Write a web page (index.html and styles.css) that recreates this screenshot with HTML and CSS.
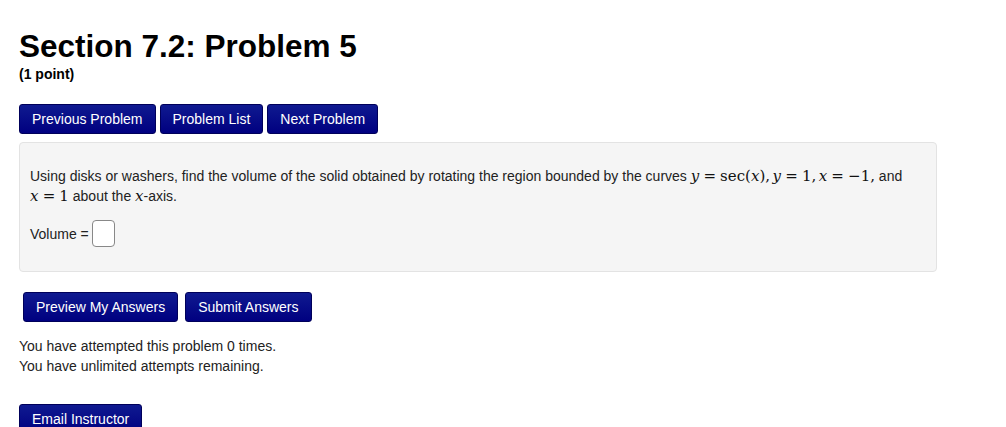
FILE: index.html
```html
<!DOCTYPE html>
<html>
<head>
<meta charset="utf-8">
<link rel="stylesheet" href="styles.css">
</head>
<body>
<div class="page">
  <h2 class="title">Section 7.2: Problem 5</h2>
  <div class="points">(1 point)</div>
  <div class="nav">
    <span class="btn">Previous Problem</span>
    <span class="btn">Problem List</span>
    <span class="btn">Next Problem</span>
  </div>
  <div class="well">
    <p class="q">Using disks or washers, find the volume of the solid obtained by rotating the region bounded by the curves <span class="m"><i>y</i><span class="rel">=</span>sec(<i>x</i>),<span class="th"></span><i>y</i><span class="rel">=</span>1,<span class="th"></span><i>x</i><span class="rel">=</span>&minus;1,</span> and <span class="m"><i>x</i><span class="rel">=</span>1</span> about the <span class="m"><i>x</i></span>-axis.</p>
    <div class="ans">Volume = <span class="input"></span></div>
  </div>
  <div class="submit">
    <span class="btn">Preview My Answers</span>
    <span class="btn">Submit Answers</span>
  </div>
  <div class="info">You have attempted this problem 0 times.<br>You have unlimited attempts remaining.</div>
  <div class="email"><span class="btn">Email Instructor</span></div>
</div>
</body>
</html>
```
FILE: styles.css
```css
html, body {
  margin: 0;
  padding: 0;
  background: #fff;
}
body {
  font-family: "Liberation Sans", Arial, sans-serif;
  font-size: 14px;
  line-height: 20px;
  color: #222;
}
.page {
  padding: 26px 19px 0 19px;
}
.title {
  margin: 0;
  font-size: 31.5px;
  line-height: 40px;
  font-weight: bold;
  color: #000;
}
.points {
  font-size: 14px;
  font-weight: bold;
  line-height: 16px;
  margin-top: 0;
  color: #000;
}
.nav {
  display: flex;
  gap: 4px;
  margin-top: 22px;
}
.btn {
  display: inline-block;
  box-sizing: border-box;
  height: 30px;
  padding: 4px 12px;
  font-size: 14px;
  line-height: 20px;
  color: #fff;
  background: linear-gradient(#0f1a90, #000080);
  border: 1px solid #00005a;
  border-radius: 3px;
  white-space: nowrap;
}
.well {
  margin-top: 8px;
  width: 918px;
  box-sizing: border-box;
  height: 130px;
  background: #f5f5f5;
  border: 1px solid #e3e3e3;
  border-radius: 4px;
  padding: 23px 10px 0 10px;
}
.q {
  margin: 0;
  color: #222;
}
.m {
  font-family: "DejaVu Serif", "Liberation Serif", serif;
  font-size: 15px;
  line-height: 18px;
  white-space: nowrap;
  color: #111;
}
.m i {
  font-style: italic;
}
.rel {
  margin: 0 0.2778em;
}
.th {
  display: inline-block;
  width: 0.1667em;
}
.ans {
  margin-top: 14px;
  display: flex;
  align-items: center;
  gap: 3px;
}
.input {
  display: inline-block;
  width: 23px;
  height: 27px;
  box-sizing: border-box;
  background: #fff;
  border: 1px solid #888;
  border-radius: 4px;
}
.submit {
  display: flex;
  gap: 7px;
  margin-top: 20px;
  padding-left: 4px;
}
.info {
  margin-top: 14px;
}
.email {
  margin-top: 28px;
}
```
